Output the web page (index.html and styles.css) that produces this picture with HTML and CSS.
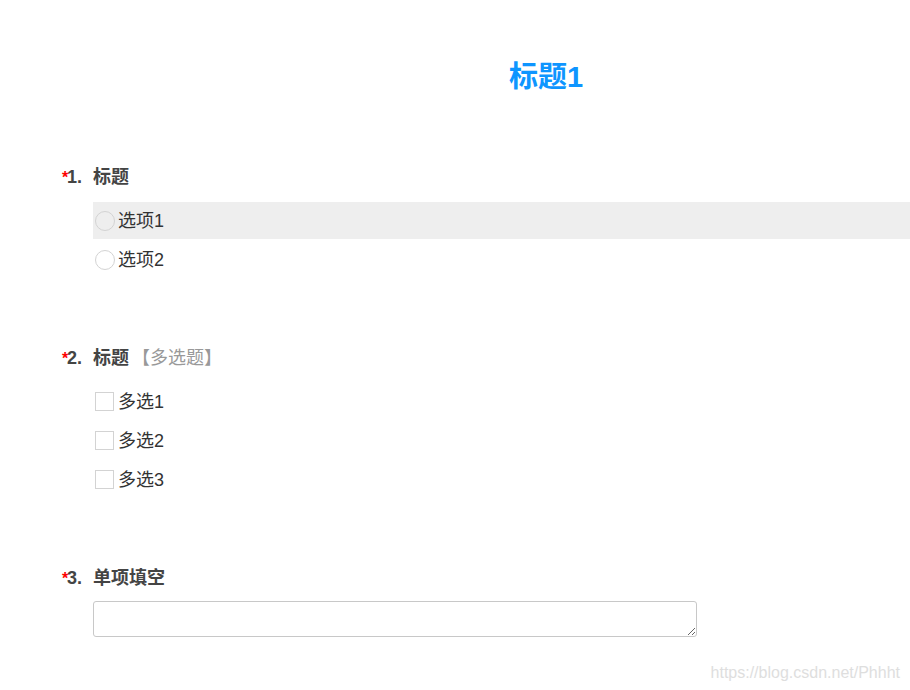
FILE: index.html
```html
<!DOCTYPE html>
<html lang="zh-CN">
<head>
    <meta charset="UTF-8">
    <meta name="viewport" content="width=device-width, initial-scale=1.0">
    <title>问卷</title>
    <link rel="stylesheet" href="styles.css">
</head>
<body>

    <div class="survey">
        <h1 class="survey-title">标题1</h1>

        <!-- 单选题 -->
        <div class="question">
            <div class="q-label"><span class="required">*</span><span class="q-num">1.</span><span class="q-text">标题</span></div>
            <ul class="options">
                <li class="option active"><span class="radio"></span>选项1</li>
                <li class="option"><span class="radio"></span>选项2</li>
            </ul>
        </div>

        <!-- 多选题 -->
        <div class="question">
            <div class="q-label"><span class="required">*</span><span class="q-num">2.</span><span class="q-text">标题</span><span class="q-type">【多选题】</span></div>
            <ul class="options">
                <li class="option"><span class="checkbox"></span>多选1</li>
                <li class="option"><span class="checkbox"></span>多选2</li>
                <li class="option"><span class="checkbox"></span>多选3</li>
            </ul>
        </div>

        <!-- 填空题 -->
        <div class="question">
            <div class="q-label"><span class="required">*</span><span class="q-num">3.</span><span class="q-text">单项填空</span></div>
            <div class="answer">
                <textarea class="fill-input"></textarea>
            </div>
        </div>
    </div>

    <div class="watermark">https://blog.csdn.net/Phhht</div>

</body>
</html>
```

FILE: styles.css
```css
body {
    font-family: "Liberation Sans", Arial, "Noto Sans CJK SC", sans-serif;
    margin: 0;
    padding: 0;
    background-color: #ffffff;
    color: #333;
}

.survey {
    padding-left: 62px;
    padding-bottom: 40px;
}

.survey-title {
    margin: 57px 0 0;
    padding-left: 120px;
    line-height: 40px;
    font-size: 29px;
    font-weight: bold;
    text-align: center;
    color: #0e95ff;
}

.question {
    margin-top: 68px;
}

.q-label {
    display: flex;
    align-items: baseline;
    line-height: 24px;
    font-size: 18px;
    font-weight: bold;
    color: #444;
}

.required {
    color: #ff0000;
    font-size: 16px;
    width: 5px;
}

.q-num {
    width: 26px;
}

.q-type {
    margin-left: 3px;
    font-weight: normal;
    color: #999;
}

.options {
    list-style: none;
    margin: 12px 0 0;
    padding: 0 0 0 31px;
}

.option {
    display: flex;
    align-items: center;
    height: 37px;
    margin-bottom: 2px;
    line-height: 18px;
    font-size: 18px;
    color: #333;
}

.option.active {
    background-color: #eeeeee;
}

.radio,
.checkbox {
    box-sizing: border-box;
    width: 20px;
    height: 20px;
    margin: 0 3px 0 2px;
    border: 1px solid #d3d3d3;
    background-color: #fff;
}

.radio {
    border-radius: 50%;
}

.checkbox {
    width: 19px;
    height: 19px;
    margin-right: 4px;
}

.option.active .radio {
    background-color: #eeeeee;
}

.answer {
    margin-top: 10px;
    padding-left: 31px;
}

.fill-input {
    display: block;
    box-sizing: border-box;
    width: 604px;
    height: 36px;
    border: 1px solid #c8c8c8;
    border-radius: 3px;
    font-size: 16px;
}

/* 水印 */
.watermark {
    position: absolute;
    top: 664px;
    right: 10px;
    font-size: 16px;
    color: #dedede;
}
```
